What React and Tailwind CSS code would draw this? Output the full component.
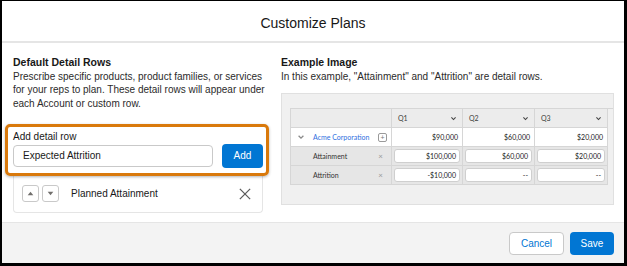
const Chevron = ({ className = '' }) => (
  <svg viewBox="0 0 10 10" className={className} fill="none" stroke="currentColor" strokeWidth="1.6">
    <path d="M2 3.5 L5 6.5 L8 3.5" />
  </svg>
);

const Caret = ({ up }) => (
  <svg viewBox="0 0 10 10" className="w-[7px] h-[7px] text-[#706e6b]" fill="currentColor">
    {up ? <path d="M1 7.5 L5 2.5 L9 7.5 Z" /> : <path d="M1 2.5 L5 7.5 L9 2.5 Z" />}
  </svg>
);

const QUARTERS = ['Q1', 'Q2', 'Q3'];
const ACME = ['$90,000', '$60,000', '$20,000'];
const DETAIL = [
  { label: 'Attainment', values: ['$100,000', '$60,000', '$20,000'] },
  { label: 'Attrition', values: ['-$10,000', '--', '--'] }
];

const ExampleTable = () => (
  <div className="grid grid-cols-[101px_71px_72px_73px] border-l border-t border-[#d6d6d6] text-[7px] text-[#3e3e3c] font-['Lato','Liberation_Sans',sans-serif]">
    <div className="h-[19px] bg-[#ececec] border-r border-b border-[#d6d6d6]" />
    {QUARTERS.map((q) => (
      <div key={q} className="h-[19px] bg-[#ececec] border-r border-b border-[#d6d6d6] flex items-center justify-between pl-[6px] pr-[5px]">
        <span>{q}</span>
        <Chevron className="w-[7px] h-[7px] text-[#444]" />
      </div>
    ))}

    <div className="h-[19px] bg-white border-r border-b border-[#d6d6d6] flex items-center pl-[6px] pr-[4px]">
      <Chevron className="w-[8px] h-[8px] text-[#8a8a8a]" />
      <span className="ml-[8px] text-[#2f6fe0]">Acme Corporation</span>
      <span className="ml-auto w-[9px] h-[9px] border border-[#9a9a9a] rounded-[2px] flex items-center justify-center text-[7px] leading-none text-[#777]">+</span>
    </div>
    {ACME.map((v, i) => (
      <div key={i} className="h-[19px] bg-white border-r border-b border-[#d6d6d6] flex items-center justify-end pr-[4px] text-[#222]">
        {v}
      </div>
    ))}

    {DETAIL.map((row) => (
      <div key={row.label} className="contents">
        <div className="h-[19px] bg-[#e6e6e6] border-r border-b border-[#d6d6d6] flex items-center pl-[22px] pr-[8px]">
          <span className="text-[#333]">{row.label}</span>
          <span className="ml-auto text-[#999] text-[8px]">×</span>
        </div>
        {row.values.map((v, i) => (
          <div key={i} className="h-[19px] bg-[#e6e6e6] border-r border-b border-[#d6d6d6] p-[2px]">
            <div className="h-full bg-white border border-[#cfcfcf] rounded-[3px] flex items-center justify-end pr-[3px] text-[#222]">
              {v}
            </div>
          </div>
        ))}
      </div>
    ))}
  </div>
);

const App = () => {
  return (
    <div className="w-[627px] h-[266px] bg-white border-t border-l-2 border-r-[3px] border-b-[3px] border-black flex flex-col text-[#181818] font-['Liberation_Sans',Arial,sans-serif]">
      <header className="h-[42px] shrink-0 border-b-2 border-[#e5e5e5] flex items-center justify-center">
        <h1 className="text-[14px] text-[#181818] pt-[4px]">Customize Plans</h1>
      </header>

      <main className="flex-1 flex pl-[11px] pt-[13px]">
        <section className="w-[250px]">
          <h2 className="text-[10.5px] leading-[13px] font-bold">Default Detail Rows</h2>
          <p className="mt-[1px] w-[254px] text-[10px] leading-[13.33px] text-[#2b2b2b]">
            Prescribe specific products, product families, or services for your reps to plan. These detail rows will appear under each Account or custom row.
          </p>

          <div className="relative mt-[20px]">
            <div className="text-[10px] leading-[13px] text-[#181818]">Add detail row</div>
            <div className="flex items-center mt-[1px] gap-[9px]">
              <div className="w-[200px] h-[22px] border border-[#c9c9c9] rounded-[4px] flex items-center pl-[9px] text-[10px] text-[#181818]">
                Expected Attrition
              </div>
              <button type="button" className="w-[41px] h-[24px] bg-[#0176d3] rounded-[4px] text-white text-[10px]">
                Add
              </button>
            </div>
            <div className="absolute -left-[8px] -right-[6px] -top-[6px] -bottom-[8px] border-[3px] border-[#d9790b] rounded-[5px] shadow-[0_1px_3px_rgba(0,0,0,0.3)] pointer-events-none" />
          </div>

          <div className="mt-[8px] h-[37px] border border-[#e5e5e5] border-t-0 rounded-b-[4px] flex items-center pl-[8px] pr-[11px]">
            <button type="button" className="w-[17px] h-[17px] border border-[#c9c9c9] rounded-[3px] flex items-center justify-center">
              <Caret up />
            </button>
            <button type="button" className="ml-[3px] w-[17px] h-[17px] border border-[#c9c9c9] rounded-[3px] flex items-center justify-center">
              <Caret />
            </button>
            <span className="ml-[12px] text-[10px] text-[#181818]">Planned Attainment</span>
            <svg viewBox="0 0 14 14" className="ml-auto w-[12px] h-[12px] text-[#5c5c5c]" fill="none" stroke="currentColor" strokeWidth="1.5">
              <path d="M1 1 L13 13 M13 1 L1 13" />
            </svg>
          </div>
        </section>

        <section className="ml-[18px] w-[333px]">
          <h2 className="text-[10.5px] leading-[13px] font-bold">Example Image</h2>
          <p className="mt-[1px] text-[10px] leading-[13.33px] text-[#2b2b2b]">
            In this example, "Attainment" and "Attrition" are detail rows.
          </p>
          <div className="mt-[10px] h-[112px] bg-[#f0f0f0] border border-[#e0e0e0] pl-[8px] pt-[14px]">
            <ExampleTable />
          </div>
        </section>
      </main>

      <footer className="h-[41px] shrink-0 bg-[#f3f3f3] border-t border-[#e5e5e5] flex items-center justify-end gap-[6px] pr-[10px]">
        <button type="button" className="w-[55px] h-[23px] bg-white border border-[#c9c9c9] rounded-[4px] text-[10px] text-[#0176d3]">
          Cancel
        </button>
        <button type="button" className="w-[44px] h-[23px] bg-[#0176d3] rounded-[4px] text-[10px] text-white">
          Save
        </button>
      </footer>
    </div>
  );
};

export default App;
